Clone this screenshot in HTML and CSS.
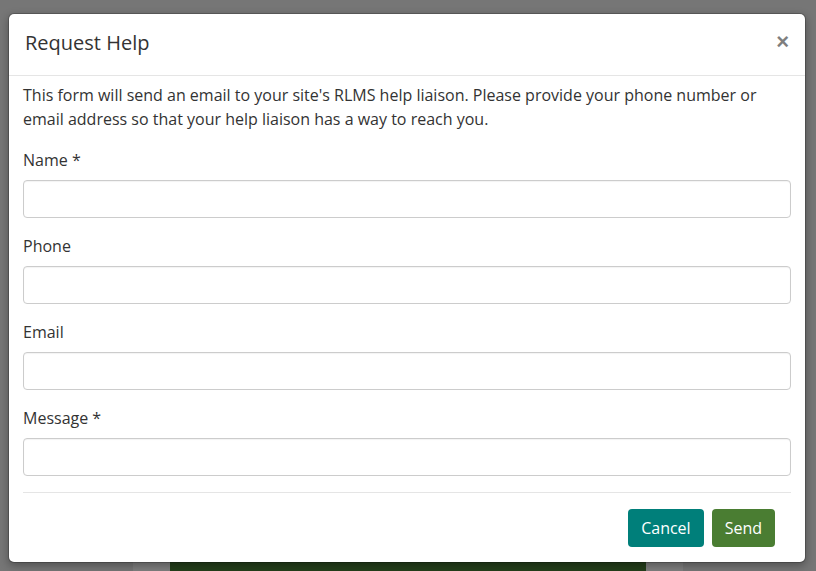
FILE: index.html
```html
<!DOCTYPE html>
<html lang="en">
<head>
<meta charset="utf-8">
<title>Request Help</title>
<link rel="stylesheet" href="styles.css">
</head>
<body>
<div class="page">
  <div class="card">
    <div class="page-button"></div>
  </div>
</div>
<div class="modal">
  <div class="modal-header">
    <h4 class="modal-title">Request Help</h4>
    <button class="close" type="button" aria-label="Close">×</button>
  </div>
  <div class="modal-body">
    <p class="intro">This form will send an email to your site's RLMS help liaison. Please provide your phone number or email address so that your help liaison has a way to reach you.</p>
    <div class="form-group">
      <label class="label">Name *</label>
      <input class="input" type="text">
    </div>
    <div class="form-group">
      <label class="label">Phone</label>
      <input class="input" type="text">
    </div>
    <div class="form-group">
      <label class="label">Email</label>
      <input class="input" type="text">
    </div>
    <div class="form-group">
      <label class="label">Message *</label>
      <input class="input" type="text">
    </div>
    <hr class="divider">
    <div class="actions">
      <button class="btn btn-cancel" type="button">Cancel</button>
      <button class="btn btn-send" type="button">Send</button>
    </div>
  </div>
</div>
</body>
</html>
```
FILE: styles.css
```css
* { box-sizing: border-box; }
html, body { margin: 0; padding: 0; height: 100%; }
body {
  background: #767676;
  font-family: "Open Sans", "Liberation Sans", sans-serif;
  color: #333;
  overflow: hidden;
}
.page {
  height: 100%;
  padding-top: 400px;
}
.card {
  width: 550px;
  height: 171px;
  margin: 0 auto;
  background: #7f7f7f;
  padding-top: 162px;
}
.page-button {
  width: 476px;
  height: 9px;
  margin: 0 auto;
  background: #243f1b;
}
.modal {
  position: absolute;
  top: 13px;
  left: 8px;
  width: 798px;
  background: #fff;
  border: 1px solid rgba(0,0,0,0.2);
  border-radius: 6px;
  box-shadow: 0 3px 9px rgba(0,0,0,0.3);
  background-clip: padding-box;
}
.modal-header {
  display: flex;
  justify-content: space-between;
  align-items: center;
  padding: 14px 15px 17px 15px;
  border-bottom: 1px solid #e5e5e5;
}
.modal-title {
  margin: 0;
  font-size: 20px;
  font-weight: 400;
  line-height: 30px;
  padding-left: 1px;
}
.close {
  border: 0;
  background: none;
  padding: 0;
  margin: -3px 1px 0 0;
  font-family: "Liberation Sans", Arial, sans-serif;
  font-size: 22px;
  font-weight: 700;
  line-height: 1;
  color: #000;
  opacity: 0.5;
}
.modal-body {
  padding: 7px 14px 15px 14px;
}
.intro {
  margin: 0 0 17px 0;
  font-size: 16px;
  line-height: 24px;
}
.form-group {
  display: flex;
  flex-direction: column;
  margin-bottom: 16px;
}
.label {
  font-size: 16px;
  line-height: 24px;
  margin-bottom: 8px;
}
.input {
  height: 38px;
  width: 100%;
  border: 1px solid #ccc;
  border-radius: 4px;
  box-shadow: inset 0 1px 1px rgba(0,0,0,0.05);
  background: #fff;
  font-family: inherit;
  font-size: 16px;
  padding: 6px 12px;
}
.divider {
  border: 0;
  border-top: 1px solid #e5e5e5;
  margin: 0 0 16px 0;
}
.actions {
  display: flex;
  justify-content: flex-end;
  gap: 8px;
  padding-right: 16px;
}
.btn {
  height: 38px;
  padding: 0 12px;
  border: 1px solid transparent;
  border-radius: 4px;
  font-family: inherit;
  font-size: 16px;
  color: #fff;
  line-height: 36px;
}
.btn-cancel { background: #007f7a; }
.btn-send { background: #4a7d32; }
```
